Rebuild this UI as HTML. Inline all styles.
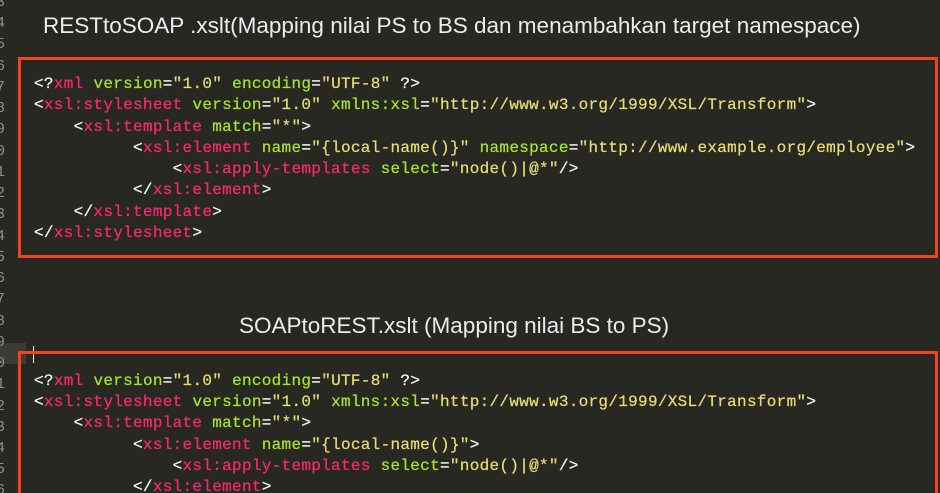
<!DOCTYPE html>
<html style="overflow:hidden;height:493px"><head><meta charset="utf-8"><style>
body{margin:0;width:940px;height:493px;overflow:hidden;background:#272822;position:relative;font-family:"Liberation Mono",monospace}
.l{position:absolute;left:34px;font-size:16px;letter-spacing:0.3px;white-space:pre;color:#f8f8f2;height:21px;line-height:21px;-webkit-text-stroke:0.25px}
.t{color:#f92672}.a{color:#a6e22e}.s{color:#e6db74}
.n{position:absolute;left:-4px;font-size:15px;color:#8f908a;line-height:21px}
.box{position:absolute;border:3px solid #f2431c;box-sizing:border-box}
.h{position:absolute;font-family:"Liberation Sans",sans-serif;font-size:22.5px;color:#ececec;white-space:pre}
</style></head><body>
<div style="position:absolute;left:0;top:343px;width:26px;height:21px;background:#3a3b35"></div>
<div style="position:absolute;left:33px;top:346px;width:1px;height:17px;background:#f8f8f0"></div>
<div class="n" style="top:-8px">3</div><div class="n" style="top:13px">4</div><div class="n" style="top:34px">5</div><div class="n" style="top:56px">6</div><div class="n" style="top:77px">7</div><div class="n" style="top:98px">8</div><div class="n" style="top:119px">9</div><div class="n" style="top:141px">0</div><div class="n" style="top:162px">1</div><div class="n" style="top:183px">2</div><div class="n" style="top:204px">3</div><div class="n" style="top:226px">4</div><div class="n" style="top:247px">5</div><div class="n" style="top:268px">6</div><div class="n" style="top:289px">7</div><div class="n" style="top:311px">8</div><div class="n" style="top:332px">9</div><div class="n" style="top:353px">0</div><div class="n" style="top:374px">1</div><div class="n" style="top:396px">2</div><div class="n" style="top:417px">3</div><div class="n" style="top:438px">4</div><div class="n" style="top:459px">5</div><div class="n" style="top:480px">6</div>
<div class="h" style="left:43px;top:13px">RESTtoSOAP .xslt(Mapping nilai PS to BS dan menambahkan target namespace)</div>
<div class="h" style="left:239px;top:313px">SOAPtoREST.xslt (Mapping nilai BS to PS)</div>
<div class="box" style="left:18px;top:57px;width:920px;height:201px"></div>
<div class="box" style="left:18px;top:351px;width:920px;height:142px;border-bottom:none"></div>
<div class="l" style="top:74px">&lt;?<span class="t">xml</span> <span class="a">version</span>=<span class="s">"1.0"</span> <span class="a">encoding</span>=<span class="s">"UTF-8"</span> ?&gt;</div>
<div class="l" style="top:95px">&lt;<span class="t">xsl:stylesheet</span> <span class="a">version</span>=<span class="s">"1.0"</span> <span class="a">xmlns:xsl</span>=<span class="s">"http://www.w3.org/1999/XSL/Transform"</span>&gt;</div>
<div class="l" style="top:117px">    &lt;<span class="t">xsl:template</span> <span class="a">match</span>=<span class="s">"*"</span>&gt;</div>
<div class="l" style="top:138px">          &lt;<span class="t">xsl:element</span> <span class="a">name</span>=<span class="s">"{local-name()}"</span> <span class="a">namespace</span>=<span class="s">"http://www.example.org/employee"</span>&gt;</div>
<div class="l" style="top:159px">              &lt;<span class="t">xsl:apply-templates</span> <span class="a">select</span>=<span class="s">"node()|@*"</span>/&gt;</div>
<div class="l" style="top:180px">          &lt;/<span class="t">xsl:element</span>&gt;</div>
<div class="l" style="top:202px">    &lt;/<span class="t">xsl:template</span>&gt;</div>
<div class="l" style="top:223px">&lt;/<span class="t">xsl:stylesheet</span>&gt;</div>
<div class="l" style="top:371px">&lt;?<span class="t">xml</span> <span class="a">version</span>=<span class="s">"1.0"</span> <span class="a">encoding</span>=<span class="s">"UTF-8"</span> ?&gt;</div>
<div class="l" style="top:392px">&lt;<span class="t">xsl:stylesheet</span> <span class="a">version</span>=<span class="s">"1.0"</span> <span class="a">xmlns:xsl</span>=<span class="s">"http://www.w3.org/1999/XSL/Transform"</span>&gt;</div>
<div class="l" style="top:413px">    &lt;<span class="t">xsl:template</span> <span class="a">match</span>=<span class="s">"*"</span>&gt;</div>
<div class="l" style="top:435px">          &lt;<span class="t">xsl:element</span> <span class="a">name</span>=<span class="s">"{local-name()}"</span>&gt;</div>
<div class="l" style="top:456px">              &lt;<span class="t">xsl:apply-templates</span> <span class="a">select</span>=<span class="s">"node()|@*"</span>/&gt;</div>
<div class="l" style="top:477px">          &lt;/<span class="t">xsl:element</span>&gt;</div>
</body></html>
